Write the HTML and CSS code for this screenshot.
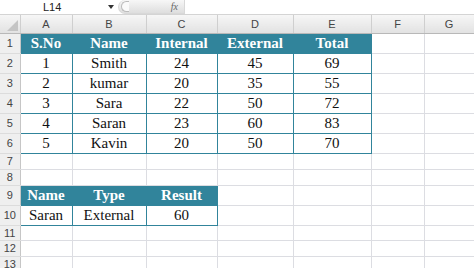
FILE: index.html
```html
<!DOCTYPE html>
<html lang="en">

<head>
    <meta charset="UTF-8">
    <meta name="viewport" content="width=device-width, initial-scale=1.0">
    <title>Sheet</title>
    <link rel="stylesheet" href="styles.css">
</head>

<body>
    <div class="formulabar">
        <div class="namebox">L14</div>
        <div class="dropdown"></div>
        <div class="fxbox">
            <span class="pill"></span>
            <span class="fx">fx</span>
        </div>
        <div class="formula"></div>
    </div>

    <table class="sheet">
        <colgroup>
            <col style="width: 20px;">
            <col style="width: 52px;">
            <col style="width: 74px;">
            <col style="width: 71px;">
            <col style="width: 76px;">
            <col style="width: 78px;">
            <col style="width: 53px;">
            <col style="width: 50px;">
        </colgroup>
        <tr class="colhead">
            <th class="corner"><span class="tri"></span></th>
            <th>A</th><th>B</th><th>C</th><th>D</th><th>E</th><th>F</th><th>G</th>
        </tr>
        <tr class="r20">
            <th class="rownum">1</th>
            <td class="head">S.No</td><td class="head">Name</td><td class="head">Internal</td><td class="head">External</td><td class="head">Total</td>
            <td></td><td></td>
        </tr>
        <tr class="r20">
            <th class="rownum">2</th>
            <td class="cell">1</td><td class="cell">Smith</td><td class="cell">24</td><td class="cell">45</td><td class="cell">69</td>
            <td></td><td></td>
        </tr>
        <tr class="r20">
            <th class="rownum">3</th>
            <td class="cell">2</td><td class="cell">kumar</td><td class="cell">20</td><td class="cell">35</td><td class="cell">55</td>
            <td></td><td></td>
        </tr>
        <tr class="r20">
            <th class="rownum">4</th>
            <td class="cell">3</td><td class="cell">Sara</td><td class="cell">22</td><td class="cell">50</td><td class="cell">72</td>
            <td></td><td></td>
        </tr>
        <tr class="r20">
            <th class="rownum">5</th>
            <td class="cell">4</td><td class="cell">Saran</td><td class="cell">23</td><td class="cell">60</td><td class="cell">83</td>
            <td></td><td></td>
        </tr>
        <tr class="r20">
            <th class="rownum">6</th>
            <td class="cell">5</td><td class="cell">Kavin</td><td class="cell">20</td><td class="cell">50</td><td class="cell">70</td>
            <td></td><td></td>
        </tr>
        <tr class="r16">
            <th class="rownum">7</th>
            <td></td><td></td><td></td><td></td><td></td><td></td><td></td>
        </tr>
        <tr class="r16">
            <th class="rownum">8</th>
            <td></td><td></td><td></td><td></td><td></td><td></td><td></td>
        </tr>
        <tr class="r20">
            <th class="rownum">9</th>
            <td class="head">Name</td><td class="head">Type</td><td class="head">Result</td>
            <td></td><td></td><td></td><td></td>
        </tr>
        <tr class="r20">
            <th class="rownum">10</th>
            <td class="cell">Saran</td><td class="cell">External</td><td class="cell">60</td>
            <td></td><td></td><td></td><td></td>
        </tr>
        <tr class="r15">
            <th class="rownum">11</th>
            <td></td><td></td><td></td><td></td><td></td><td></td><td></td>
        </tr>
        <tr class="r16">
            <th class="rownum">12</th>
            <td></td><td></td><td></td><td></td><td></td><td></td><td></td>
        </tr>
        <tr class="r16">
            <th class="rownum">13</th>
            <td></td><td></td><td></td><td></td><td></td><td></td><td></td>
        </tr>
    </table>
</body>

</html>
```

FILE: styles.css
```css
* {
    margin: 0;
    padding: 0;
    box-sizing: border-box;
}

body {
    width: 474px;
    height: 268px;
    overflow: hidden;
    background: #fff;
    font-family: "Liberation Serif", "Times New Roman", serif;
}

/* formula bar */
.formulabar {
    display: flex;
    height: 15px;
    border-bottom: 1px solid #d4d4d4;
    background: #fff;
}

.namebox {
    width: 104px;
    padding-left: 43px;
    font-family: "Liberation Sans", Arial, sans-serif;
    font-size: 11px;
    line-height: 14px;
    color: #222;
}

.dropdown {
    width: 14px;
    position: relative;
}

.dropdown::after {
    content: "";
    position: absolute;
    left: 4px;
    top: 5px;
    border-left: 3px solid transparent;
    border-right: 3px solid transparent;
    border-top: 4px solid #333;
}

.fxbox {
    display: flex;
    align-items: center;
    justify-content: space-between;
    width: 67px;
    padding-right: 6px;
    background: linear-gradient(#f7f7f7, #dedede);
    border-radius: 7px 0 0 7px;
    border: 1px solid #d8d8d8;
    border-top: none;
}

.pill {
    width: 8px;
    height: 11px;
    margin-left: 2px;
    border: 1px solid #bbb;
    border-right: none;
    border-radius: 6px 0 0 6px;
    background: #fafafa;
}

.fx {
    font-family: "Liberation Serif", serif;
    font-style: italic;
    font-size: 10px;
    color: #666;
}

.formula {
    flex: 1;
}

/* sheet grid */
.sheet {
    table-layout: fixed;
    width: 474px;
    border-collapse: collapse;
}

.sheet td {
    border-right: 1px solid #dcdde2;
    border-bottom: 1px solid #dcdde2;
    padding: 0;
    text-align: center;
    font-size: 15px;
    white-space: nowrap;
    overflow: hidden;
}

.colhead {
    height: 18px;
}

.colhead th {
    background: linear-gradient(#f6f6f6, #e2e2e2);
    border-right: 1px solid #cfcfcf;
    border-bottom: 1px solid #b8b8b8;
    font-family: "Liberation Sans", Arial, sans-serif;
    font-weight: normal;
    font-size: 11px;
    color: #444;
}

.corner {
    position: relative;
}

.tri {
    position: absolute;
    right: 2px;
    bottom: 2px;
    border-left: 11px solid transparent;
    border-bottom: 11px solid #c4c4c4;
}

.rownum {
    background: #efefef;
    border-right: 1px solid #c6c6c6;
    border-bottom: 1px solid #dcdcdc;
    font-family: "Liberation Sans", Arial, sans-serif;
    font-weight: normal;
    font-size: 11px;
    color: #444;
}

.r15 { height: 15px; }
.r16 { height: 16px; }
.r20 { height: 20px; }

.sheet td.head {
    background: #31849b;
    border: 1px solid #31849b;
    color: #fff;
    font-weight: bold;
}

.sheet td.cell {
    border: 1px solid #31849b;
    color: #111;
}
```
